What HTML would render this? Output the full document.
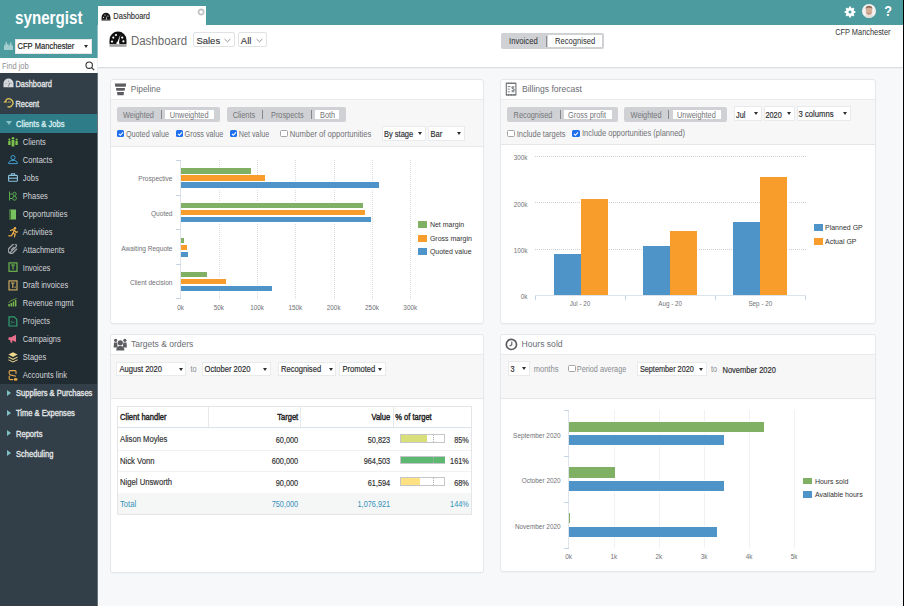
<!DOCTYPE html><html><head><meta charset="utf-8"><style>
*{margin:0;padding:0;box-sizing:border-box}
html,body{width:904px;height:606px;overflow:hidden;background:#f7f8fa;font-family:"Liberation Sans",sans-serif;position:relative}
.a{position:absolute}
.t{position:absolute;white-space:nowrap;line-height:1;transform:scaleY(1.15);transform-origin:50% 50%}
.r{text-align:right}
.panel{position:absolute;background:#fff;border:1px solid #e6e7ea;border-radius:3px;box-shadow:0 1px 1px rgba(0,0,0,.03)}
.car{position:absolute;width:0;height:0;border-left:2.5px solid transparent;border-right:2.5px solid transparent;border-top:3px solid #2b2d30}
.g{background:#80b064}.o{background:#f89d2b}.b{background:#4f94c8}
</style></head><body>
<div class="a" style="left:0.00px;top:0.00px;width:97.00px;height:606.00px;background:#333f48;"></div>
<div class="a" style="left:0.00px;top:0.00px;width:97.00px;height:58.00px;background:#4b9b9f;"></div>
<div class="t" style="left:15.00px;top:9.90px;font-size:15.2px;color:#fff;font-weight:700;">synergist</div>
<svg class="a" style="left:4px;top:40.5px" width="9" height="9" viewBox="0 0 9 9"><path d="M0 9V4.5L1.5 3.5V1.5L3 0.5V3.5L4.5 2.5V5L6 3.5V2L7.5 1V4L9 5V9Z" fill="#a3cdcf"/></svg>
<div class="a" style="left:15.00px;top:39.00px;width:76.60px;height:14.50px;background:#fff;border:1px solid #e6e6e6;border-radius:0px;"></div>
<div class="t" style="left:17.50px;top:43.20px;font-size:7.6px;color:#222;font-weight:400;-webkit-text-stroke:0.15px #222;">CFP Manchester</div>
<div class="car" style="left:83.5px;top:45px"></div>
<div class="a" style="left:0.00px;top:58.00px;width:97.00px;height:15.00px;background:#fff;"></div>
<div class="t" style="left:2.00px;top:62.75px;font-size:7.5px;color:#8e9093;font-weight:400;">Find job</div>
<svg class="a" style="left:85px;top:61.2px" width="10" height="10" viewBox="0 0 10 10"><circle cx="4.2" cy="4.2" r="3.2" fill="none" stroke="#333" stroke-width="1.1"/><path d="M6.6 6.6L9.2 9.2" stroke="#333" stroke-width="1.2"/></svg>
<div class="t" style="left:15.50px;top:80.58px;font-size:7.45px;color:#e2e5e7;font-weight:400;-webkit-text-stroke:0.3px #e2e5e7;">Dashboard</div>
<svg class="a" style="left:3px;top:77.5px" width="11" height="10" viewBox="0 0 11 10"><path d="M0.5 9.2V5.6A5 5 0 0 1 10.5 5.6V9.2Z" fill="#d6d9db"/><g fill="#8c9297"><circle cx="3" cy="5.5" r="0.6"/><circle cx="5.5" cy="3.2" r="0.6"/><circle cx="8" cy="5.5" r="0.6"/></g><path d="M5.3 8.5L6.8 4.6" stroke="#6d747a" stroke-width="0.9"/></svg>
<div class="t" style="left:15.50px;top:100.58px;font-size:7.45px;color:#e2e5e7;font-weight:400;-webkit-text-stroke:0.3px #e2e5e7;">Recent</div>
<svg class="a" style="left:3px;top:97px" width="11" height="11" viewBox="0 0 11 11"><path d="M2.6 3.6A4 4 0 1 1 4.5 9.6" fill="none" stroke="#e3c45a" stroke-width="1.3"/><path d="M0.3 5.5L2.6 3.2L4.6 5.6Z" fill="#e3c45a"/><path d="M5 5H8" fill="none" stroke="#e3c45a" stroke-width="0.8"/></svg>
<div class="a" style="left:0.00px;top:113.80px;width:97.00px;height:19.40px;background:#2e7c87;"></div>
<div class="a" style="left:5.8px;top:121.4px;width:0;height:0;border-left:3.1px solid transparent;border-right:3.1px solid transparent;border-top:4.6px solid #86c3c6"></div>
<div class="t" style="left:16.00px;top:120.60px;font-size:7.6px;color:#d5ecee;font-weight:400;-webkit-text-stroke:0.3px #d5ecee;">Clients &amp; Jobs</div>
<div class="a" style="left:0.00px;top:133.00px;width:97.00px;height:251.00px;background:#212b32;"></div>
<div class="t" style="left:22.80px;top:139.35px;font-size:7.5px;color:#d3d6d8;font-weight:400;">Clients</div>
<svg class="a" style="left:8px;top:137.2px" width="10" height="11" viewBox="0 0 10 11"><g fill="#7cc24a"><circle cx="5" cy="1.3" r="1.3"/><path d="M3.6 3H6.4V9.5H3.6Z"/><circle cx="1.4" cy="2.6" r="1.1"/><path d="M0.2 4H2.6V8H0.2Z"/><circle cx="8.6" cy="2.6" r="1.1"/><path d="M7.4 4H9.8V8H7.4Z"/></g></svg>
<div class="t" style="left:22.80px;top:157.23px;font-size:7.5px;color:#d3d6d8;font-weight:400;">Contacts</div>
<svg class="a" style="left:8px;top:155.08px" width="10" height="11" viewBox="0 0 10 11"><g fill="none" stroke="#3f9dd0" stroke-width="1"><circle cx="5" cy="2.6" r="2.1"/><path d="M0.6 8.6C0.6 6.2 2.4 5.4 5 5.4C7.6 5.4 9.4 6.2 9.4 8.6Z"/></g></svg>
<div class="t" style="left:22.80px;top:175.11px;font-size:7.5px;color:#d3d6d8;font-weight:400;">Jobs</div>
<svg class="a" style="left:8px;top:172.96px" width="10" height="11" viewBox="0 0 10 11"><g fill="none" stroke="#8cc4de" stroke-width="1.1"><rect x="0.6" y="2.4" width="8.8" height="5.8" rx="0.8"/><path d="M3.4 2.2V0.8H6.6V2.2"/><path d="M0.8 5.2H9.2"/></g></svg>
<div class="t" style="left:22.80px;top:192.99px;font-size:7.5px;color:#d3d6d8;font-weight:400;">Phases</div>
<svg class="a" style="left:8px;top:190.84px" width="10" height="11" viewBox="0 0 10 11"><g fill="none" stroke="#5aa94e" stroke-width="1"><path d="M1.5 0.5V9.5"/><path d="M1.5 3H4"/><path d="M1.5 7.5H4"/><circle cx="6.5" cy="3" r="1.7"/><circle cx="6.5" cy="7.3" r="1.9"/></g></svg>
<div class="t" style="left:22.80px;top:210.87px;font-size:7.5px;color:#d3d6d8;font-weight:400;">Opportunities</div>
<svg class="a" style="left:8px;top:208.72px" width="10" height="11" viewBox="0 0 10 11"><path d="M1.5 0.5H8V10.5H1.5Z" fill="#78c060"/><path d="M1.5 0.5L3 1.5V10.5L1.5 10.5Z" fill="#3e7030"/></svg>
<div class="t" style="left:22.80px;top:228.75px;font-size:7.5px;color:#d3d6d8;font-weight:400;">Activities</div>
<svg class="a" style="left:8px;top:226.6px" width="10" height="11" viewBox="0 0 10 11"><g fill="none" stroke="#f3b14a" stroke-width="1.2" stroke-linecap="round"><path d="M6.2 1.3V1.3"/><path d="M2.5 3.5L4.5 2.6L6.4 3.2L5 6.2L7.2 7.2L6.5 9.8"/><path d="M5 6.2L3.6 8.6L0.8 8.8"/><path d="M6.4 3.4L8 5.2L9.5 4.8"/></g><circle cx="7" cy="1.3" r="1.2" fill="#f3b14a"/></svg>
<div class="t" style="left:22.80px;top:246.63px;font-size:7.5px;color:#d3d6d8;font-weight:400;">Attachments</div>
<svg class="a" style="left:8px;top:244.48px" width="10" height="11" viewBox="0 0 10 11"><g fill="none" stroke="#a0a5a9" stroke-width="1.3"><path d="M2.2 8.6L7.8 3A1.9 1.9 0 0 0 5.1 0.3L0.9 4.5A3 3 0 0 0 5.1 8.7L9 4.8"/><path d="M3 6.2L6.3 2.9"/></g></svg>
<div class="t" style="left:22.80px;top:264.51px;font-size:7.5px;color:#d3d6d8;font-weight:400;">Invoices</div>
<svg class="a" style="left:8px;top:262.36px" width="10" height="11" viewBox="0 0 10 11"><rect x="1" y="0.9" width="8" height="8.4" fill="none" stroke="#6fb64e" stroke-width="1.2"/><path d="M3 2.6H7V3.6H5.6V7.6H4.4V3.6H3Z" fill="#6fb64e"/></svg>
<div class="t" style="left:22.80px;top:282.39px;font-size:7.5px;color:#d3d6d8;font-weight:400;">Draft invoices</div>
<svg class="a" style="left:8px;top:280.24px" width="10" height="11" viewBox="0 0 10 11"><rect x="1" y="0.9" width="8" height="9" fill="none" stroke="#c8aa60" stroke-width="1.2"/><path d="M3 2.6H6.6V3.6H5.4V8H4.2V3.6H3Z" fill="#c8aa60"/><rect x="6.6" y="6.6" width="1.2" height="1.2" fill="#c8aa60"/></svg>
<div class="t" style="left:22.80px;top:300.27px;font-size:7.5px;color:#d3d6d8;font-weight:400;">Revenue mgmt</div>
<svg class="a" style="left:8px;top:298.12px" width="10" height="11" viewBox="0 0 10 11"><g fill="#79b84a"><rect x="0.3" y="6" width="1.5" height="2.5"/><rect x="2.5" y="5" width="1.5" height="3.5"/><rect x="4.7" y="3.6" width="1.5" height="4.9"/><rect x="6.9" y="2" width="1.5" height="6.5"/></g><path d="M0.5 4.5L4 2.2L8.6 0.5" fill="none" stroke="#79b84a" stroke-width="0.8"/></svg>
<div class="t" style="left:22.80px;top:318.15px;font-size:7.5px;color:#d3d6d8;font-weight:400;">Projects</div>
<svg class="a" style="left:8px;top:316.0px" width="10" height="11" viewBox="0 0 10 11"><path d="M1 0.8H6.2L8.8 3.4V10H1Z" fill="none" stroke="#2fa070" stroke-width="1.2"/><path d="M3 5L4.3 6.3L3 7.6M5 5.5L6.5 7" stroke="#2fa070" stroke-width="0.9" fill="none"/></svg>
<div class="t" style="left:22.80px;top:336.03px;font-size:7.5px;color:#d3d6d8;font-weight:400;">Campaigns</div>
<svg class="a" style="left:8px;top:333.88px" width="10" height="11" viewBox="0 0 10 11"><path d="M0.5 3.2H3L8 0.8V8L3 6H0.5Z" fill="#e8708a"/><path d="M2 6H3.8L4.5 8.8H2.8Z" fill="#e8708a"/></svg>
<div class="t" style="left:22.80px;top:353.91px;font-size:7.5px;color:#d3d6d8;font-weight:400;">Stages</div>
<svg class="a" style="left:8px;top:351.76px" width="10" height="11" viewBox="0 0 10 11"><g fill="#efd98a"><path d="M5 0.3L9.6 2.6L5 4.9L0.4 2.6Z"/><path d="M0.4 4.4L5 6.7L9.6 4.4V5.6L5 7.9L0.4 5.6Z"/><path d="M0.4 7.2L5 9.5L9.6 7.2V8.2L5 10.4L0.4 8.2Z"/></g></svg>
<div class="t" style="left:22.80px;top:371.79px;font-size:7.5px;color:#d3d6d8;font-weight:400;">Accounts link</div>
<svg class="a" style="left:8px;top:369.64px" width="10" height="11" viewBox="0 0 10 11"><g fill="none" stroke="#e6a84a" stroke-width="1.1"><path d="M1.2 4V1.6A1 1 0 0 1 2.2 0.6H7A1 1 0 0 1 8 1.6V4"/><path d="M1.2 4.6L8 6.2"/><path d="M1.2 6V8.6A1 1 0 0 0 2.2 9.6H5"/></g><ellipse cx="7.6" cy="9.4" rx="1.9" ry="1.3" fill="#e6a84a"/></svg>
<div class="a" style="left:7px;top:390.00px;width:0;height:0;border-top:3.3px solid transparent;border-bottom:3.3px solid transparent;border-left:4.4px solid #7ec0c4"></div>
<div class="t" style="left:16.00px;top:390.43px;font-size:7.55px;color:#e2e5e7;font-weight:400;-webkit-text-stroke:0.3px #e2e5e7;">Suppliers &amp; Purchases</div>
<div class="a" style="left:7px;top:410.05px;width:0;height:0;border-top:3.3px solid transparent;border-bottom:3.3px solid transparent;border-left:4.4px solid #7ec0c4"></div>
<div class="t" style="left:16.00px;top:410.48px;font-size:7.55px;color:#e2e5e7;font-weight:400;-webkit-text-stroke:0.3px #e2e5e7;">Time &amp; Expenses</div>
<div class="a" style="left:7px;top:430.10px;width:0;height:0;border-top:3.3px solid transparent;border-bottom:3.3px solid transparent;border-left:4.4px solid #7ec0c4"></div>
<div class="t" style="left:16.00px;top:430.53px;font-size:7.55px;color:#e2e5e7;font-weight:400;-webkit-text-stroke:0.3px #e2e5e7;">Reports</div>
<div class="a" style="left:7px;top:450.15px;width:0;height:0;border-top:3.3px solid transparent;border-bottom:3.3px solid transparent;border-left:4.4px solid #7ec0c4"></div>
<div class="t" style="left:16.00px;top:450.58px;font-size:7.55px;color:#e2e5e7;font-weight:400;-webkit-text-stroke:0.3px #e2e5e7;">Scheduling</div>
<div class="a" style="left:97.00px;top:73.00px;width:1.00px;height:533.00px;background:#69737a;"></div>
<div class="a" style="left:97.00px;top:58.00px;width:1.00px;height:15.00px;background:#eceef0;"></div>
<div class="a" style="left:97.00px;top:25.00px;width:1.00px;height:33.00px;background:#8fbfc2;"></div>
<div class="a" style="left:97.00px;top:0.00px;width:807.00px;height:25.00px;background:#4b9b9f;"></div>
<div class="a" style="left:98.00px;top:6.10px;width:108.00px;height:18.90px;background:#fff;"></div>
<svg class="a" style="left:101px;top:12px" width="10" height="9" viewBox="0 0 10 9"><path d="M0.6 8.4V5.2A4.4 4.4 0 0 1 9.4 5.2V8.4Z" fill="#161616"/><g fill="#fff"><circle cx="2.6" cy="5.3" r="0.6"/><circle cx="4" cy="3" r="0.6"/><circle cx="7" cy="4" r="0.6"/><path d="M4.6 7.6L6.2 3.4L5.6 7.8Z"/></g><rect x="0.6" y="7.6" width="8.8" height="0.9" fill="#888"/></svg>
<div class="t" style="left:113.30px;top:12.85px;font-size:7.5px;color:#333;font-weight:400;-webkit-text-stroke:0.12px #333;">Dashboard</div>
<svg class="a" style="left:196.5px;top:7.8px" width="8.2" height="8.2" viewBox="0 0 8.2 8.2"><circle cx="4.1" cy="4.1" r="2.6" fill="none" stroke="#c3c4c6" stroke-width="1.8"/></svg>
<svg class="a" style="left:844px;top:6px" width="12" height="12" viewBox="0 0 12 12"><g fill="#fff"><circle cx="6" cy="6" r="4"/><rect x="4.9" y="0.6" width="2.2" height="2.6" rx="0.4" transform="rotate(0 6 6)"/><rect x="4.9" y="0.6" width="2.2" height="2.6" rx="0.4" transform="rotate(45 6 6)"/><rect x="4.9" y="0.6" width="2.2" height="2.6" rx="0.4" transform="rotate(90 6 6)"/><rect x="4.9" y="0.6" width="2.2" height="2.6" rx="0.4" transform="rotate(135 6 6)"/><rect x="4.9" y="0.6" width="2.2" height="2.6" rx="0.4" transform="rotate(180 6 6)"/><rect x="4.9" y="0.6" width="2.2" height="2.6" rx="0.4" transform="rotate(225 6 6)"/><rect x="4.9" y="0.6" width="2.2" height="2.6" rx="0.4" transform="rotate(270 6 6)"/><rect x="4.9" y="0.6" width="2.2" height="2.6" rx="0.4" transform="rotate(315 6 6)"/></g><circle cx="6" cy="6" r="1.5" fill="#4b9b9f"/></svg>
<svg class="a" style="left:862px;top:4.3px" width="14" height="14" viewBox="0 0 14 14"><defs><clipPath id="av"><circle cx="7" cy="7" r="6.8"/></clipPath></defs><circle cx="7" cy="7" r="7" fill="#f4f2f0"/><g clip-path="url(#av)"><path d="M2 14C2 11 4 10.5 7 10.5C10 10.5 12 11 12 14Z" fill="#e4e0dc"/><ellipse cx="7" cy="7" rx="3.3" ry="4.1" fill="#d7ae98"/><path d="M3.6 5.2C3.6 2.6 5 1.8 7 1.8C9 1.8 10.4 2.6 10.4 5.2C9.6 4 8.4 3.8 7 3.8C5.6 3.8 4.4 4 3.6 5.2Z" fill="#8d6b55"/><path d="M4.4 8.6C5 10.8 9 10.8 9.6 8.6C9 9.6 5 9.6 4.4 8.6Z" fill="#b08a74"/></g></svg>
<div class="t" style="left:884.30px;top:5.30px;font-size:12.6px;color:#fff;font-weight:700;">?</div>
<div class="a" style="left:98.00px;top:25.00px;width:805.00px;height:42.00px;background:#fff;"></div>
<div class="a" style="left:98.00px;top:67.00px;width:805.00px;height:1.00px;background:#dcdde0;"></div>
<div class="a" style="left:98.00px;top:68.00px;width:805.00px;height:1.00px;background:#eef0f2;"></div>
<svg class="a" style="left:109px;top:31px" width="18" height="16" viewBox="0 0 18 16"><path d="M0.5 13.2V9A8.5 8.5 0 0 1 17.5 9V13.2Z" fill="#111"/><g fill="#fff"><circle cx="3" cy="10.6" r="1.1"/><circle cx="4.3" cy="6.6" r="1.1"/><circle cx="7" cy="4" r="1.1"/><circle cx="13.2" cy="6.6" r="1.1"/><circle cx="14.4" cy="10.3" r="1.1"/><circle cx="8.9" cy="12.2" r="1.4"/><path d="M8.2 11.8L11.4 3.6L9.8 12.3Z"/></g><rect x="0.5" y="13.4" width="17" height="2.4" fill="#a0a0a0"/></svg>
<div class="t" style="left:130.90px;top:36.25px;font-size:11.5px;color:#6a6a6a;font-weight:400;">Dashboard</div>
<div class="a" style="left:192.60px;top:31.50px;width:42.20px;height:15.90px;background:#fff;border:1px solid #e1e2e4;border-radius:2px;"></div>
<div class="t" style="left:196.40px;top:35.85px;font-size:9.5px;color:#333;font-weight:400;transform:scaleY(1.02);-webkit-text-stroke:0.12px #333;">Sales</div>
<svg class="a" style="left:223.5px;top:38.3px" width="7" height="5" viewBox="0 0 7 5"><path d="M0.6 1L3.5 3.8L6.4 1" fill="none" stroke="#888" stroke-width="0.9"/></svg>
<div class="a" style="left:237.60px;top:31.50px;width:29.70px;height:15.90px;background:#fff;border:1px solid #e1e2e4;border-radius:2px;"></div>
<div class="t" style="left:240.80px;top:35.85px;font-size:9.5px;color:#333;font-weight:400;transform:scaleY(1.02);-webkit-text-stroke:0.12px #333;">All</div>
<svg class="a" style="left:255.5px;top:38.3px" width="7" height="5" viewBox="0 0 7 5"><path d="M0.6 1L3.5 3.8L6.4 1" fill="none" stroke="#888" stroke-width="0.9"/></svg>
<div class="a" style="left:500.80px;top:32.90px;width:103.10px;height:16.30px;background:#d0d1d5;border-radius:2px"></div>
<div class="a" style="left:548.00px;top:34.80px;width:53.90px;height:12.50px;background:#fff;"></div>
<div class="a" style="left:546.20px;top:35.50px;width:1.30px;height:11.00px;background:#8d8f93;"></div>
<div class="t" style="left:509.10px;top:38.45px;font-size:7.7px;color:#2b2d30;font-weight:400;">Invoiced</div>
<div class="t" style="left:555.10px;top:38.30px;font-size:7.6px;color:#2b2d30;font-weight:400;">Recognised</div>
<div class="t" style="right:13.50px;top:29.30px;font-size:7.4px;color:#333;font-weight:400;">CFP Manchester</div>
<div class="a" style="left:903.00px;top:0.00px;width:1.00px;height:606.00px;background:#000;"></div>
<div class="panel" style="left:110px;top:79px;width:374px;height:244.60000000000002px"></div>
<div class="a" style="left:111.00px;top:99.00px;width:372.00px;height:1.00px;background:#eaebed;"></div>
<div class="a" style="left:111.00px;top:100.00px;width:372.00px;height:45.90px;background:#f7f7f7;"></div>
<div class="a" style="left:111.00px;top:145.90px;width:372.00px;height:1.00px;background:#e6e7e9;"></div>
<svg class="a" style="left:114px;top:83px" width="13" height="13" viewBox="0 0 13 13"><g fill="#5b5d61"><path d="M0.8 0.4H12.2L11.7 3.7H1.3Z"/><path d="M2 5H11L10.6 7.8H2.4Z"/><path d="M3 9H10L9.6 12.2H3.4Z"/></g></svg>
<div class="t" style="left:130.80px;top:85.00px;font-size:8.4px;color:#6a6d72;font-weight:400;">Pipeline</div>
<div class="a" style="left:116.80px;top:107.20px;width:103.20px;height:14.70px;background:#d0d1d5;border-radius:2px"></div>
<div class="a" style="left:164.70px;top:109.70px;width:49.30px;height:9.80px;background:#fff;"></div>
<div class="a" style="left:160.50px;top:110.20px;width:1.00px;height:8.70px;background:#85878b;"></div>
<div class="t" style="left:123.00px;top:111.78px;font-size:7.35px;color:#737579;font-weight:400;">Weighted</div>
<div class="t" style="left:169.70px;top:111.78px;font-size:7.35px;color:#737579;font-weight:400;">Unweighted</div>
<div class="a" style="left:226.50px;top:107.20px;width:119.40px;height:14.70px;background:#d0d1d5;border-radius:2px"></div>
<div class="a" style="left:315.00px;top:109.70px;width:24.40px;height:9.80px;background:#fff;"></div>
<div class="a" style="left:261.50px;top:110.20px;width:1.00px;height:8.70px;background:#85878b;"></div>
<div class="a" style="left:310.50px;top:110.20px;width:1.00px;height:8.70px;background:#85878b;"></div>
<div class="t" style="left:232.70px;top:111.78px;font-size:7.35px;color:#737579;font-weight:400;">Clients</div>
<div class="t" style="left:271.00px;top:111.78px;font-size:7.35px;color:#737579;font-weight:400;">Prospects</div>
<div class="t" style="left:320.00px;top:111.78px;font-size:7.35px;color:#737579;font-weight:400;">Both</div>
<div class="a" style="left:116.80px;top:129.60px;width:7.2px;height:7.2px;border-radius:1.5px;background:#1f70ee"></div>
<svg class="a" style="left:117.8px;top:130.6px" width="6" height="6" viewBox="0 0 6 6"><path d="M1 2.8L2.4 4.3L5 1.3" fill="none" stroke="#fff" stroke-width="1.1"/></svg>
<div class="t" style="left:125.90px;top:130.57px;font-size:7.25px;color:#6f7176;font-weight:400;">Quoted value</div>
<div class="a" style="left:175.80px;top:129.60px;width:7.2px;height:7.2px;border-radius:1.5px;background:#1f70ee"></div>
<svg class="a" style="left:176.8px;top:130.6px" width="6" height="6" viewBox="0 0 6 6"><path d="M1 2.8L2.4 4.3L5 1.3" fill="none" stroke="#fff" stroke-width="1.1"/></svg>
<div class="t" style="left:184.60px;top:130.57px;font-size:7.25px;color:#6f7176;font-weight:400;">Gross value</div>
<div class="a" style="left:230.00px;top:129.60px;width:7.2px;height:7.2px;border-radius:1.5px;background:#1f70ee"></div>
<svg class="a" style="left:231px;top:130.6px" width="6" height="6" viewBox="0 0 6 6"><path d="M1 2.8L2.4 4.3L5 1.3" fill="none" stroke="#fff" stroke-width="1.1"/></svg>
<div class="t" style="left:238.70px;top:130.57px;font-size:7.25px;color:#6f7176;font-weight:400;">Net value</div>
<div class="a" style="left:280.40px;top:129.60px;width:7.2px;height:7.2px;border-radius:1.5px;background:#fff;border:1px solid #a3a5a8"></div>
<div class="t" style="left:289.80px;top:131.18px;font-size:7.65px;color:#6f7176;font-weight:400;">Number of opportunities</div>
<div class="a" style="left:381.80px;top:126.00px;width:44.00px;height:14.60px;background:#fff;border:1px solid #e9eaec;border-radius:0px;"></div>
<div class="t" style="left:384.00px;top:131.05px;font-size:7.5px;color:#2b2d30;font-weight:400;-webkit-text-stroke:0.15px #2b2d30;">By stage</div>
<div class="car" style="left:418.20px;top:132.00px"></div>
<div class="a" style="left:428.40px;top:126.00px;width:36.50px;height:14.60px;background:#fff;border:1px solid #e9eaec;border-radius:0px;"></div>
<div class="t" style="left:430.50px;top:131.05px;font-size:7.5px;color:#2b2d30;font-weight:400;-webkit-text-stroke:0.15px #2b2d30;">Bar</div>
<div class="car" style="left:457.30px;top:132.00px"></div>
<div class="a" style="left:218.60px;top:159.80px;height:139.00px;width:0;border-left:1px dotted #dadbde"></div>
<div class="a" style="left:256.90px;top:159.80px;height:139.00px;width:0;border-left:1px dotted #dadbde"></div>
<div class="a" style="left:295.20px;top:159.80px;height:139.00px;width:0;border-left:1px dotted #dadbde"></div>
<div class="a" style="left:333.50px;top:159.80px;height:139.00px;width:0;border-left:1px dotted #dadbde"></div>
<div class="a" style="left:371.80px;top:159.80px;height:139.00px;width:0;border-left:1px dotted #dadbde"></div>
<div class="a" style="left:410.10px;top:159.80px;height:139.00px;width:0;border-left:1px dotted #dadbde"></div>
<div class="a" style="left:180.00px;top:160.60px;width:1.00px;height:138.20px;background:#dfe3ea;"></div>
<div class="a" style="left:176.00px;top:160.10px;width:4.50px;height:1.00px;background:#c5d3e3;"></div>
<div class="a" style="left:176.00px;top:194.65px;width:4.50px;height:1.00px;background:#c5d3e3;"></div>
<div class="a" style="left:176.00px;top:229.20px;width:4.50px;height:1.00px;background:#c5d3e3;"></div>
<div class="a" style="left:176.00px;top:263.75px;width:4.50px;height:1.00px;background:#c5d3e3;"></div>
<div class="a" style="left:176.00px;top:298.30px;width:4.50px;height:1.00px;background:#c5d3e3;"></div>
<div class="a" style="left:181.00px;top:167.50px;width:71.20px;height:7.10px;background:#fff;"></div>
<div class="a" style="left:181.00px;top:174.50px;width:84.90px;height:7.10px;background:#fff;"></div>
<div class="a" style="left:181.00px;top:181.50px;width:198.60px;height:7.10px;background:#fff;"></div>
<div class="a" style="left:181.00px;top:168.40px;width:70.30px;height:5.30px;background:#80b064;"></div>
<div class="a" style="left:181.00px;top:175.40px;width:84.00px;height:5.30px;background:#f89d2b;"></div>
<div class="a" style="left:181.00px;top:182.40px;width:197.70px;height:5.30px;background:#4f94c8;"></div>
<div class="t" style="right:731.50px;top:176.40px;font-size:6.55px;color:#707276;font-weight:400;">Prospective</div>
<div class="a" style="left:181.00px;top:202.05px;width:183.00px;height:7.10px;background:#fff;"></div>
<div class="a" style="left:181.00px;top:209.05px;width:184.80px;height:7.10px;background:#fff;"></div>
<div class="a" style="left:181.00px;top:216.05px;width:190.90px;height:7.10px;background:#fff;"></div>
<div class="a" style="left:181.00px;top:202.95px;width:182.10px;height:5.30px;background:#80b064;"></div>
<div class="a" style="left:181.00px;top:209.95px;width:183.90px;height:5.30px;background:#f89d2b;"></div>
<div class="a" style="left:181.00px;top:216.95px;width:190.00px;height:5.30px;background:#4f94c8;"></div>
<div class="t" style="right:731.50px;top:210.95px;font-size:6.55px;color:#707276;font-weight:400;">Quoted</div>
<div class="a" style="left:181.00px;top:236.60px;width:3.70px;height:7.10px;background:#fff;"></div>
<div class="a" style="left:181.00px;top:243.60px;width:6.40px;height:7.10px;background:#fff;"></div>
<div class="a" style="left:181.00px;top:250.60px;width:8.20px;height:7.10px;background:#fff;"></div>
<div class="a" style="left:181.00px;top:237.50px;width:2.80px;height:5.30px;background:#80b064;"></div>
<div class="a" style="left:181.00px;top:244.50px;width:5.50px;height:5.30px;background:#f89d2b;"></div>
<div class="a" style="left:181.00px;top:251.50px;width:7.30px;height:5.30px;background:#4f94c8;"></div>
<div class="t" style="right:731.50px;top:245.50px;font-size:6.55px;color:#707276;font-weight:400;">Awaiting Requote</div>
<div class="a" style="left:181.00px;top:271.15px;width:26.80px;height:7.10px;background:#fff;"></div>
<div class="a" style="left:181.00px;top:278.15px;width:45.70px;height:7.10px;background:#fff;"></div>
<div class="a" style="left:181.00px;top:285.15px;width:91.90px;height:7.10px;background:#fff;"></div>
<div class="a" style="left:181.00px;top:272.05px;width:25.90px;height:5.30px;background:#80b064;"></div>
<div class="a" style="left:181.00px;top:279.05px;width:44.80px;height:5.30px;background:#f89d2b;"></div>
<div class="a" style="left:181.00px;top:286.05px;width:91.00px;height:5.30px;background:#4f94c8;"></div>
<div class="t" style="right:731.50px;top:280.05px;font-size:6.55px;color:#707276;font-weight:400;">Client decision</div>
<div class="t" style="left:160.50px;width:40px;text-align:center;top:304.50px;font-size:6.4px;color:#707276">0k</div>
<div class="t" style="left:198.80px;width:40px;text-align:center;top:304.50px;font-size:6.4px;color:#707276">50k</div>
<div class="t" style="left:237.10px;width:40px;text-align:center;top:304.50px;font-size:6.4px;color:#707276">100k</div>
<div class="t" style="left:275.40px;width:40px;text-align:center;top:304.50px;font-size:6.4px;color:#707276">150k</div>
<div class="t" style="left:313.70px;width:40px;text-align:center;top:304.50px;font-size:6.4px;color:#707276">200k</div>
<div class="t" style="left:352.00px;width:40px;text-align:center;top:304.50px;font-size:6.4px;color:#707276">250k</div>
<div class="t" style="left:390.30px;width:40px;text-align:center;top:304.50px;font-size:6.4px;color:#707276">300k</div>
<div class="a" style="left:418.20px;top:221.30px;width:8.90px;height:6.80px;background:#80b064;"></div>
<div class="t" style="left:429.90px;top:221.40px;font-size:7.0px;color:#333;font-weight:400;">Net margin</div>
<div class="a" style="left:418.20px;top:234.80px;width:8.90px;height:6.80px;background:#f89d2b;"></div>
<div class="t" style="left:429.90px;top:234.90px;font-size:7.0px;color:#333;font-weight:400;">Gross margin</div>
<div class="a" style="left:418.20px;top:248.30px;width:8.90px;height:6.80px;background:#4f94c8;"></div>
<div class="t" style="left:429.90px;top:248.40px;font-size:7.0px;color:#333;font-weight:400;">Quoted value</div>
<div class="panel" style="left:500px;top:79px;width:375.5px;height:244.5px"></div>
<div class="a" style="left:501.00px;top:99.00px;width:373.50px;height:1.00px;background:#eaebed;"></div>
<div class="a" style="left:501.00px;top:100.00px;width:373.50px;height:44.30px;background:#f7f7f7;"></div>
<div class="a" style="left:501.00px;top:144.30px;width:373.50px;height:1.00px;background:#e6e7e9;"></div>
<svg class="a" style="left:505px;top:82px" width="12" height="14" viewBox="0 0 12 14"><rect x="1.3" y="1.3" width="9.6" height="11.6" fill="none" stroke="#6e7175" stroke-width="1.1"/><path d="M1.3 1.3H10.9M1.3 12.9H10.9" stroke="#6e7175" stroke-width="1.6" stroke-dasharray="1 0.6"/><g stroke="#6e7175" stroke-width="0.9"><path d="M2.8 4.6H5.4"/><path d="M2.8 7.2H4.8"/><path d="M2.8 9.8H4.8"/><path d="M6.6 9.8H9.4"/></g><path d="M9.3 5.2C8.4 4.6 6.8 4.7 6.9 5.8C7 6.9 9.4 6.8 9.3 8C9.2 8.9 7.6 9 6.7 8.5" fill="none" stroke="#6e7175" stroke-width="1.1"/></svg>
<div class="t" style="left:522.00px;top:84.92px;font-size:8.55px;color:#6a6d72;font-weight:400;">Billings forecast</div>
<div class="a" style="left:507.40px;top:107.40px;width:110.30px;height:14.50px;background:#d0d1d5;border-radius:2px"></div>
<div class="a" style="left:563.50px;top:109.90px;width:48.00px;height:9.60px;background:#fff;"></div>
<div class="a" style="left:559.50px;top:110.40px;width:1.00px;height:8.50px;background:#85878b;"></div>
<div class="t" style="left:513.60px;top:111.88px;font-size:7.35px;color:#737579;font-weight:400;">Recognised</div>
<div class="t" style="left:568.00px;top:111.88px;font-size:7.35px;color:#737579;font-weight:400;">Gross profit</div>
<div class="a" style="left:624.40px;top:107.40px;width:102.60px;height:14.50px;background:#d0d1d5;border-radius:2px"></div>
<div class="a" style="left:672.60px;top:109.90px;width:48.60px;height:9.60px;background:#fff;"></div>
<div class="a" style="left:667.50px;top:110.40px;width:1.00px;height:8.50px;background:#85878b;"></div>
<div class="t" style="left:630.60px;top:111.88px;font-size:7.35px;color:#737579;font-weight:400;">Weighted</div>
<div class="t" style="left:677.00px;top:111.88px;font-size:7.35px;color:#737579;font-weight:400;">Unweighted</div>
<div class="a" style="left:734.20px;top:106.00px;width:27.40px;height:15.30px;background:#fff;border:1px solid #e9eaec;border-radius:0px;"></div>
<div class="t" style="left:736.00px;top:111.50px;font-size:7.3px;color:#2b2d30;font-weight:400;-webkit-text-stroke:0.15px #2b2d30;">Jul</div>
<div class="car" style="left:754.00px;top:112.35px"></div>
<div class="a" style="left:763.50px;top:106.00px;width:31.00px;height:15.30px;background:#fff;border:1px solid #e9eaec;border-radius:0px;"></div>
<div class="t" style="left:765.50px;top:111.50px;font-size:7.3px;color:#2b2d30;font-weight:400;-webkit-text-stroke:0.15px #2b2d30;">2020</div>
<div class="car" style="left:786.90px;top:112.35px"></div>
<div class="a" style="left:796.80px;top:106.00px;width:54.20px;height:15.30px;background:#fff;border:1px solid #e9eaec;border-radius:0px;"></div>
<div class="t" style="left:798.60px;top:111.30px;font-size:7.7px;color:#2b2d30;font-weight:400;-webkit-text-stroke:0.15px #2b2d30;">3 columns</div>
<div class="car" style="left:843.40px;top:112.35px"></div>
<div class="a" style="left:507.40px;top:129.60px;width:7.2px;height:7.2px;border-radius:1.5px;background:#fff;border:1px solid #a3a5a8"></div>
<div class="t" style="left:516.80px;top:131.18px;font-size:7.45px;color:#6f7176;font-weight:400;">Include targets</div>
<div class="a" style="left:572.40px;top:129.60px;width:7.2px;height:7.2px;border-radius:1.5px;background:#1f70ee"></div>
<svg class="a" style="left:573.4px;top:130.6px" width="6" height="6" viewBox="0 0 6 6"><path d="M1 2.8L2.4 4.3L5 1.3" fill="none" stroke="#fff" stroke-width="1.1"/></svg>
<div class="t" style="left:582.00px;top:130.45px;font-size:7.5px;color:#6f7176;font-weight:400;">Include opportunities (planned)</div>
<div class="a" style="left:535px;top:248.70px;width:270.5px;height:0;border-top:1px dotted #cfd0d3"></div>
<div class="a" style="left:535px;top:202.40px;width:270.5px;height:0;border-top:1px dotted #cfd0d3"></div>
<div class="a" style="left:535px;top:156.10px;width:270.5px;height:0;border-top:1px dotted #cfd0d3"></div>
<div class="a" style="left:534.50px;top:295.50px;width:1.00px;height:4.50px;background:#c5d3e3;"></div>
<div class="a" style="left:624.67px;top:295.50px;width:1.00px;height:4.50px;background:#c5d3e3;"></div>
<div class="a" style="left:714.84px;top:295.50px;width:1.00px;height:4.50px;background:#c5d3e3;"></div>
<div class="a" style="left:805.01px;top:295.50px;width:1.00px;height:4.50px;background:#c5d3e3;"></div>
<div class="t" style="right:376.60px;top:294.35px;font-size:6.3px;color:#707276;font-weight:400;">0k</div>
<div class="t" style="right:376.60px;top:248.05px;font-size:6.3px;color:#707276;font-weight:400;">100k</div>
<div class="t" style="right:376.60px;top:201.75px;font-size:6.3px;color:#707276;font-weight:400;">200k</div>
<div class="t" style="right:376.60px;top:155.45px;font-size:6.3px;color:#707276;font-weight:400;">300k</div>
<div class="a" style="left:553.10px;top:253.00px;width:27.80px;height:42.50px;background:#fff;"></div>
<div class="a" style="left:580.90px;top:197.70px;width:27.60px;height:97.80px;background:#fff;"></div>
<div class="a" style="left:554.00px;top:253.90px;width:26.90px;height:41.60px;background:#4f94c8;"></div>
<div class="a" style="left:580.90px;top:198.60px;width:26.70px;height:96.90px;background:#f89d2b;"></div>
<div class="a" style="left:642.50px;top:245.30px;width:27.80px;height:50.20px;background:#fff;"></div>
<div class="a" style="left:670.30px;top:229.80px;width:27.50px;height:65.70px;background:#fff;"></div>
<div class="a" style="left:643.40px;top:246.20px;width:26.90px;height:49.30px;background:#4f94c8;"></div>
<div class="a" style="left:670.30px;top:230.70px;width:26.60px;height:64.80px;background:#f89d2b;"></div>
<div class="a" style="left:732.10px;top:221.10px;width:27.90px;height:74.40px;background:#fff;"></div>
<div class="a" style="left:760.00px;top:176.00px;width:27.80px;height:119.50px;background:#fff;"></div>
<div class="a" style="left:733.00px;top:222.00px;width:27.00px;height:73.50px;background:#4f94c8;"></div>
<div class="a" style="left:760.00px;top:176.90px;width:26.90px;height:118.60px;background:#f89d2b;"></div>
<div class="a" style="left:535.00px;top:295.00px;width:270.50px;height:1.00px;background:#dde3ea;"></div>
<div class="t" style="left:550.00px;width:60px;text-align:center;top:300.80px;font-size:6.3px;color:#707276">Jul - 20</div>
<div class="t" style="left:640.17px;width:60px;text-align:center;top:300.80px;font-size:6.3px;color:#707276">Aug - 20</div>
<div class="t" style="left:730.34px;width:60px;text-align:center;top:300.80px;font-size:6.3px;color:#707276">Sep - 20</div>
<div class="a" style="left:813.80px;top:224.30px;width:9.00px;height:7.00px;background:#4f94c8;"></div>
<div class="t" style="left:825.00px;top:224.40px;font-size:7.0px;color:#333;font-weight:400;">Planned GP</div>
<div class="a" style="left:813.80px;top:237.50px;width:9.00px;height:7.00px;background:#f89d2b;"></div>
<div class="t" style="left:825.00px;top:237.60px;font-size:7.0px;color:#333;font-weight:400;">Actual GP</div>
<div class="panel" style="left:110px;top:334px;width:374px;height:238.79999999999995px"></div>
<div class="a" style="left:111.00px;top:354.00px;width:372.00px;height:1.00px;background:#eaebed;"></div>
<div class="a" style="left:111.00px;top:355.00px;width:372.00px;height:43.30px;background:#f7f7f7;"></div>
<div class="a" style="left:111.00px;top:398.30px;width:372.00px;height:1.00px;background:#e6e7e9;"></div>
<svg class="a" style="left:113px;top:337.5px" width="15" height="13" viewBox="0 0 15 13"><g fill="#5b5d61"><circle cx="2.6" cy="2.3" r="1.6"/><path d="M1 4.5H4.2L4.6 9.5H0.6Z"/><circle cx="11.9" cy="2.3" r="1.6"/><path d="M10.3 4.5H13.5L13.9 9.5H9.9Z"/><circle cx="7.3" cy="4.8" r="2.6"/><path d="M3.3 12.5C3.3 9 4.8 8 7.3 8C9.8 8 11.3 9 11.3 12.5Z"/></g></svg>
<div class="t" style="left:131.00px;top:339.95px;font-size:8.5px;color:#6a6d72;font-weight:400;">Targets &amp; orders</div>
<div class="a" style="left:116.40px;top:361.60px;width:69.80px;height:14.70px;background:#fff;border:1px solid #e9eaec;border-radius:0px;"></div>
<div class="t" style="left:119.40px;top:365.75px;font-size:7.6px;color:#2b2d30;font-weight:400;-webkit-text-stroke:0.15px #2b2d30;">August 2020</div>
<div class="car" style="left:178.60px;top:367.65px"></div>
<div class="t" style="left:190.60px;top:365.55px;font-size:7.3px;color:#8a8c90;font-weight:400;">to</div>
<div class="a" style="left:201.50px;top:361.60px;width:69.00px;height:14.70px;background:#fff;border:1px solid #e9eaec;border-radius:0px;"></div>
<div class="t" style="left:204.50px;top:365.75px;font-size:7.6px;color:#2b2d30;font-weight:400;-webkit-text-stroke:0.15px #2b2d30;">October 2020</div>
<div class="car" style="left:262.90px;top:367.65px"></div>
<div class="a" style="left:278.00px;top:361.60px;width:58.20px;height:14.70px;background:#fff;border:1px solid #e9eaec;border-radius:0px;"></div>
<div class="t" style="left:281.00px;top:365.75px;font-size:7.6px;color:#2b2d30;font-weight:400;-webkit-text-stroke:0.15px #2b2d30;">Recognised</div>
<div class="car" style="left:328.60px;top:367.65px"></div>
<div class="a" style="left:339.40px;top:361.60px;width:46.20px;height:14.70px;background:#fff;border:1px solid #e9eaec;border-radius:0px;"></div>
<div class="t" style="left:342.40px;top:365.75px;font-size:7.6px;color:#2b2d30;font-weight:400;-webkit-text-stroke:0.15px #2b2d30;">Promoted</div>
<div class="car" style="left:378.00px;top:367.65px"></div>
<div class="a" style="left:117.30px;top:405.50px;width:354.30px;height:109.80px;background:#fff;border:1px solid #e3e5e8;border-radius:0px;"></div>
<div class="a" style="left:118.30px;top:426.50px;width:352.30px;height:1.10px;background:#dbe2e8;"></div>
<div class="a" style="left:208.20px;top:406.50px;width:1.00px;height:20.00px;background:#e6e8eb;"></div>
<div class="a" style="left:300.10px;top:406.50px;width:1.00px;height:20.00px;background:#e6e8eb;"></div>
<div class="a" style="left:392.50px;top:406.50px;width:1.00px;height:20.00px;background:#e6e8eb;"></div>
<div class="a" style="left:118.30px;top:449.60px;width:352.30px;height:0.60px;background:#f1f2f3;"></div>
<div class="a" style="left:118.30px;top:471.10px;width:352.30px;height:0.60px;background:#f1f2f3;"></div>
<div class="a" style="left:118.30px;top:492.70px;width:352.30px;height:21.60px;background:#f5f7f7;"></div>
<div class="t" style="left:120.00px;top:414.12px;font-size:7.55px;color:#222;font-weight:400;-webkit-text-stroke:0.35px #222;">Client handler</div>
<div class="t" style="right:605.80px;top:414.12px;font-size:7.55px;color:#222;font-weight:400;-webkit-text-stroke:0.35px #222;">Target</div>
<div class="t" style="right:513.80px;top:414.12px;font-size:7.55px;color:#222;font-weight:400;-webkit-text-stroke:0.35px #222;">Value</div>
<div class="t" style="left:395.20px;top:414.12px;font-size:7.55px;color:#222;font-weight:400;-webkit-text-stroke:0.35px #222;">% of target</div>
<div class="t" style="left:120.00px;top:436.35px;font-size:7.7px;color:#333;font-weight:400;-webkit-text-stroke:0.15px #333;">Alison Moyles</div>
<div class="t" style="right:605.80px;top:436.52px;font-size:7.35px;color:#333;font-weight:400;-webkit-text-stroke:0.15px #333;">60,000</div>
<div class="t" style="right:513.80px;top:436.52px;font-size:7.35px;color:#333;font-weight:400;-webkit-text-stroke:0.15px #333;">50,823</div>
<div class="a" style="left:400.20px;top:434.20px;width:45.20px;height:8.60px;background:#fff;border:1px solid #c4c6c9;border-radius:0px;"></div>
<div class="a" style="left:401.20px;top:435.20px;width:25.60px;height:6.60px;background:#d9e07a;"></div>
<div class="a" style="left:433px;top:435.20px;height:6.6px;width:0;border-left:1px dotted #aaa"></div>
<div class="t" style="right:435.10px;top:436.52px;font-size:7.35px;color:#333;font-weight:400;-webkit-text-stroke:0.15px #333;">85%</div>
<div class="t" style="left:120.00px;top:457.90px;font-size:7.7px;color:#333;font-weight:400;-webkit-text-stroke:0.15px #333;">Nick Vonn</div>
<div class="t" style="right:605.80px;top:458.07px;font-size:7.35px;color:#333;font-weight:400;-webkit-text-stroke:0.15px #333;">600,000</div>
<div class="t" style="right:513.80px;top:458.07px;font-size:7.35px;color:#333;font-weight:400;-webkit-text-stroke:0.15px #333;">964,503</div>
<div class="a" style="left:400.20px;top:455.75px;width:45.20px;height:8.60px;background:#fff;border:1px solid #c4c6c9;border-radius:0px;"></div>
<div class="a" style="left:401.20px;top:456.75px;width:44.20px;height:6.60px;background:#5cb96f;"></div>
<div class="a" style="left:433px;top:456.75px;height:6.6px;width:0;border-left:1px dotted #aaa"></div>
<div class="t" style="right:435.10px;top:458.07px;font-size:7.35px;color:#333;font-weight:400;-webkit-text-stroke:0.15px #333;">161%</div>
<div class="t" style="left:120.00px;top:479.45px;font-size:7.7px;color:#333;font-weight:400;-webkit-text-stroke:0.15px #333;">Nigel Unsworth</div>
<div class="t" style="right:605.80px;top:479.62px;font-size:7.35px;color:#333;font-weight:400;-webkit-text-stroke:0.15px #333;">90,000</div>
<div class="t" style="right:513.80px;top:479.62px;font-size:7.35px;color:#333;font-weight:400;-webkit-text-stroke:0.15px #333;">61,594</div>
<div class="a" style="left:400.20px;top:477.30px;width:45.20px;height:8.60px;background:#fff;border:1px solid #c4c6c9;border-radius:0px;"></div>
<div class="a" style="left:401.20px;top:478.30px;width:19.30px;height:6.60px;background:#fde182;"></div>
<div class="a" style="left:433px;top:478.30px;height:6.6px;width:0;border-left:1px dotted #aaa"></div>
<div class="t" style="right:435.10px;top:479.62px;font-size:7.35px;color:#333;font-weight:400;-webkit-text-stroke:0.15px #333;">68%</div>
<div class="t" style="left:120.00px;top:500.95px;font-size:7.7px;color:#3792b8;font-weight:400;">Total</div>
<div class="t" style="right:605.80px;top:501.12px;font-size:7.35px;color:#3792b8;font-weight:400;">750,000</div>
<div class="t" style="right:513.80px;top:501.12px;font-size:7.35px;color:#3792b8;font-weight:400;">1,076,921</div>
<div class="t" style="right:435.10px;top:501.12px;font-size:7.35px;color:#3792b8;font-weight:400;">144%</div>
<div class="panel" style="left:500px;top:334.2px;width:375.5px;height:238.3px"></div>
<div class="a" style="left:501.00px;top:354.20px;width:373.50px;height:1.00px;background:#eaebed;"></div>
<div class="a" style="left:501.00px;top:355.20px;width:373.50px;height:42.80px;background:#f7f7f7;"></div>
<div class="a" style="left:501.00px;top:398.00px;width:373.50px;height:1.00px;background:#e6e7e9;"></div>
<svg class="a" style="left:504.5px;top:337.5px" width="13" height="13" viewBox="0 0 13 13"><circle cx="6.4" cy="6.4" r="5.1" fill="none" stroke="#5b5d61" stroke-width="1.7"/><path d="M6.8 3.5V6.8L4.5 8" fill="none" stroke="#5b5d61" stroke-width="1.1"/></svg>
<div class="t" style="left:521.50px;top:339.90px;font-size:8.6px;color:#6a6d72;font-weight:400;">Hours sold</div>
<div class="a" style="left:507.50px;top:361.10px;width:22.00px;height:15.10px;background:#fff;border:1px solid #e9eaec;border-radius:0px;"></div>
<div class="t" style="left:510.50px;top:365.60px;font-size:7.3px;color:#2b2d30;font-weight:400;-webkit-text-stroke:0.15px #2b2d30;">3</div>
<div class="car" style="left:521.90px;top:367.35px"></div>
<div class="t" style="left:533.70px;top:365.62px;font-size:7.55px;color:#8a8c90;font-weight:400;">months</div>
<div class="a" style="left:568.40px;top:365.10px;width:7.2px;height:7.2px;border-radius:1.5px;background:#fff;border:1px solid #a3a5a8"></div>
<div class="t" style="left:576.80px;top:365.95px;font-size:7.3px;color:#8a8c90;font-weight:400;">Period average</div>
<div class="a" style="left:636.90px;top:361.60px;width:69.80px;height:14.70px;background:#fff;border:1px solid #e9eaec;border-radius:0px;"></div>
<div class="t" style="left:639.90px;top:365.90px;font-size:7.3px;color:#2b2d30;font-weight:400;-webkit-text-stroke:0.15px #2b2d30;">September 2020</div>
<div class="car" style="left:699.10px;top:367.65px"></div>
<div class="t" style="left:711.00px;top:365.55px;font-size:7.3px;color:#8a8c90;font-weight:400;">to</div>
<div class="t" style="left:722.50px;top:366.65px;font-size:7.5px;color:#2b2d30;font-weight:400;-webkit-text-stroke:0.15px #2b2d30;">November 2020</div>
<div class="a" style="left:613.90px;top:409.90px;height:138.40px;width:0;border-left:1px solid #f1f1f3"></div>
<div class="a" style="left:659.00px;top:409.90px;height:138.40px;width:0;border-left:1px solid #f1f1f3"></div>
<div class="a" style="left:704.10px;top:409.90px;height:138.40px;width:0;border-left:1px solid #f1f1f3"></div>
<div class="a" style="left:749.20px;top:409.90px;height:138.40px;width:0;border-left:1px solid #f1f1f3"></div>
<div class="a" style="left:794.30px;top:409.90px;height:138.40px;width:0;border-left:1px solid #f1f1f3"></div>
<div class="a" style="left:568.20px;top:410.90px;width:1.00px;height:137.40px;background:#dfe3ea;"></div>
<div class="a" style="left:564.20px;top:410.40px;width:4.50px;height:1.00px;background:#c5d3e3;"></div>
<div class="a" style="left:564.20px;top:456.20px;width:4.50px;height:1.00px;background:#c5d3e3;"></div>
<div class="a" style="left:564.20px;top:502.00px;width:4.50px;height:1.00px;background:#c5d3e3;"></div>
<div class="a" style="left:564.20px;top:547.80px;width:4.50px;height:1.00px;background:#c5d3e3;"></div>
<div class="a" style="left:569.20px;top:420.60px;width:196.10px;height:12.20px;background:#fff;"></div>
<div class="a" style="left:569.20px;top:434.10px;width:156.20px;height:12.20px;background:#fff;"></div>
<div class="a" style="left:569.20px;top:421.50px;width:195.20px;height:10.40px;background:#80b064;"></div>
<div class="a" style="left:569.20px;top:435.00px;width:155.30px;height:10.40px;background:#4f94c8;"></div>
<div class="a" style="left:569.20px;top:466.40px;width:47.20px;height:12.20px;background:#fff;"></div>
<div class="a" style="left:569.20px;top:479.90px;width:156.20px;height:12.20px;background:#fff;"></div>
<div class="a" style="left:569.20px;top:467.30px;width:46.30px;height:10.40px;background:#80b064;"></div>
<div class="a" style="left:569.20px;top:480.80px;width:155.30px;height:10.40px;background:#4f94c8;"></div>
<div class="a" style="left:569.20px;top:512.20px;width:1.70px;height:12.20px;background:#fff;"></div>
<div class="a" style="left:569.20px;top:525.70px;width:149.20px;height:12.20px;background:#fff;"></div>
<div class="a" style="left:569.20px;top:513.10px;width:0.80px;height:10.40px;background:#80b064;"></div>
<div class="a" style="left:569.20px;top:526.60px;width:148.30px;height:10.40px;background:#4f94c8;"></div>
<div class="t" style="right:343.30px;top:432.57px;font-size:6.45px;color:#707276;font-weight:400;">September 2020</div>
<div class="t" style="right:343.30px;top:478.37px;font-size:6.45px;color:#707276;font-weight:400;">October 2020</div>
<div class="t" style="right:343.30px;top:524.17px;font-size:6.45px;color:#707276;font-weight:400;">November 2020</div>
<div class="t" style="left:548.70px;width:40px;text-align:center;top:553.80px;font-size:6.4px;color:#707276">0k</div>
<div class="t" style="left:593.80px;width:40px;text-align:center;top:553.80px;font-size:6.4px;color:#707276">1k</div>
<div class="t" style="left:638.90px;width:40px;text-align:center;top:553.80px;font-size:6.4px;color:#707276">2k</div>
<div class="t" style="left:684.00px;width:40px;text-align:center;top:553.80px;font-size:6.4px;color:#707276">3k</div>
<div class="t" style="left:729.10px;width:40px;text-align:center;top:553.80px;font-size:6.4px;color:#707276">4k</div>
<div class="t" style="left:774.20px;width:40px;text-align:center;top:553.80px;font-size:6.4px;color:#707276">5k</div>
<div class="a" style="left:803.10px;top:478.00px;width:9.00px;height:6.40px;background:#80b064;"></div>
<div class="t" style="left:814.90px;top:477.80px;font-size:7.0px;color:#333;font-weight:400;">Hours sold</div>
<div class="a" style="left:803.10px;top:491.20px;width:9.00px;height:6.40px;background:#4f94c8;"></div>
<div class="t" style="left:814.90px;top:491.00px;font-size:7.0px;color:#333;font-weight:400;">Available hours</div>
</body></html>
